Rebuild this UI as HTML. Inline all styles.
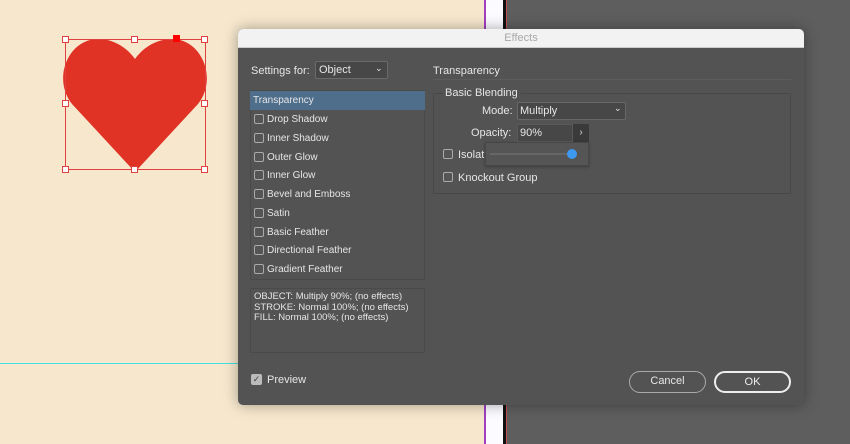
<!DOCTYPE html>
<html><head><style>
*{margin:0;padding:0;box-sizing:border-box}
body{width:850px;height:444px;overflow:hidden;position:relative;background:#5e5e5e;font-family:"Liberation Sans",sans-serif;}
.abs{position:absolute}
.t{color:#e6e6e6;font-size:10.5px;position:absolute;white-space:nowrap}
.cb{position:absolute;width:10px;height:10px;border:1px solid #aaa;border-radius:2px;background:#555}
.h{position:absolute;width:7px;height:7px;border:1px solid #e04040;background:#fff}
</style></head><body>
<div class="abs" style="left:0;top:0;width:484px;height:444px;background:#f6e7cd"></div>
<div class="abs" style="left:484px;top:0;width:2px;height:444px;background:#a040c0"></div>
<div class="abs" style="left:486px;top:0;width:17px;height:444px;background:#fcfbff"></div>
<div class="abs" style="left:503px;top:0;width:3px;height:444px;background:#111"></div>
<div class="abs" style="left:506px;top:0;width:1px;height:444px;background:#c05050"></div>
<div class="abs" style="left:0;top:363px;width:238px;height:1px;background:#40e0e0"></div>
<svg class="abs" style="left:60px;top:34px" width="150" height="140">
<path d="M75 138 L12 70 C-8 45 8 5 38 5 C55 5 68 15 75 25 C82 15 95 5 112 5 C142 5 158 45 138 70 Z" fill="#e03325"/>
<rect x="5.5" y="5.5" width="140" height="130" fill="none" stroke="#e04040" stroke-width="1"/>
</svg>
<div class="h" style="left:62px;top:36px"></div><div class="h" style="left:131px;top:36px"></div><div class="h" style="left:201px;top:36px"></div>
<div class="h" style="left:62px;top:100px"></div><div class="h" style="left:201px;top:100px"></div>
<div class="h" style="left:62px;top:166px"></div><div class="h" style="left:131px;top:166px"></div><div class="h" style="left:201px;top:166px"></div>
<div class="abs" style="left:173px;top:35px;width:7px;height:7px;background:#f00"></div>

<div class="abs" style="left:238px;top:29px;width:566px;height:376px;background:#535353;border-radius:5px;box-shadow:0 0 14px rgba(0,0,0,.35);overflow:hidden">
 <div class="abs" style="left:0;top:0;width:566px;height:19px;background:#f2f2f2;border-bottom:1px solid #ccc;color:#a8a8a8;font-size:11px;text-align:center;line-height:19px">Effects</div>
</div>
<div class="t" style="left:251px;top:65px;font-size:11px">Settings for:</div>
<div class="abs" style="left:315px;top:61px;width:73px;height:18px;border:1px solid #6a6a6a;background:#474747;border-radius:2px"></div>
<div class="t" style="left:319px;top:64px;font-size:11px">Object</div>
<div class="t" style="left:375px;top:63px;font-size:9px">⌄</div>
<div class="abs" style="left:250px;top:90px;width:175px;height:190px;border:1px solid #4a4a4a"></div>
<div class="abs" style="left:250px;top:91px;width:175px;height:19px;background:#4f6e8c"></div>
<div class="t" style="left:253px;top:95px;font-size:10px">Transparency</div>
<div class="cb" style="left:254px;top:114px"></div><div class="t" style="left:267px;top:114px;font-size:10px">Drop Shadow</div>
<div class="cb" style="left:254px;top:133px"></div><div class="t" style="left:267px;top:133px;font-size:10px">Inner Shadow</div>
<div class="cb" style="left:254px;top:152px"></div><div class="t" style="left:267px;top:152px;font-size:10px">Outer Glow</div>
<div class="cb" style="left:254px;top:170px"></div><div class="t" style="left:267px;top:170px;font-size:10px">Inner Glow</div>
<div class="cb" style="left:254px;top:189px"></div><div class="t" style="left:267px;top:189px;font-size:10px">Bevel and Emboss</div>
<div class="cb" style="left:254px;top:208px"></div><div class="t" style="left:267px;top:208px;font-size:10px">Satin</div>
<div class="cb" style="left:254px;top:227px"></div><div class="t" style="left:267px;top:227px;font-size:10px">Basic Feather</div>
<div class="cb" style="left:254px;top:245px"></div><div class="t" style="left:267px;top:245px;font-size:10px">Directional Feather</div>
<div class="cb" style="left:254px;top:264px"></div><div class="t" style="left:267px;top:264px;font-size:10px">Gradient Feather</div>
<div class="abs" style="left:250px;top:288px;width:175px;height:65px;border:1px solid #4a4a4a"></div>
<div class="t" style="left:254px;top:292px;font-size:9.5px;line-height:10.5px">OBJECT: Multiply 90%; (no effects)<br>STROKE: Normal 100%; (no effects)<br>FILL: Normal 100%; (no effects)</div>
<div class="abs" style="left:251px;top:374px;width:11px;height:11px;background:#bbb;border-radius:2px;color:#444;font-size:9px;line-height:11px;text-align:center">✓</div>
<div class="t" style="left:267px;top:374px;font-size:11px">Preview</div>

<div class="t" style="left:433px;top:65px;font-size:11px">Transparency</div>
<div class="abs" style="left:433px;top:79px;width:358px;height:1px;background:#5c5c5c"></div>
<div class="abs" style="left:433px;top:93px;width:358px;height:101px;border:1px solid #484848;border-radius:2px"></div>
<div class="abs" style="left:443px;top:87px;width:78px;height:12px;background:#535353"></div>
<div class="t" style="left:445px;top:87px;font-size:11px">Basic Blending</div>
<div class="t" style="left:482px;top:105px;font-size:11px">Mode:</div>
<div class="abs" style="left:517px;top:102px;width:109px;height:18px;border:1px solid #686868;background:#474747;border-radius:2px"></div>
<div class="t" style="left:520px;top:105px;font-size:11px">Multiply</div>
<div class="t" style="left:614px;top:103px;font-size:9px">⌄</div>
<div class="t" style="left:471px;top:127px;font-size:11px">Opacity:</div>
<div class="abs" style="left:517px;top:124px;width:56px;height:18px;background:#474747;border:1px solid #5a5a5a"></div>
<div class="t" style="left:520px;top:127px;font-size:11px">90%</div>
<div class="abs" style="left:573px;top:124px;width:16px;height:18px;background:#3a3a3a;color:#ddd;font-size:10px;text-align:center;line-height:17px">›</div>
<div class="cb" style="left:443px;top:149px"></div><div class="t" style="left:458px;top:149px;font-size:11px">Isolat</div>
<div class="abs" style="left:485px;top:142px;width:104px;height:24px;background:#555;border:1px solid #474747;box-shadow:0 1px 3px rgba(0,0,0,.3)"></div>
<div class="abs" style="left:490px;top:153px;width:80px;height:2px;background:#666"></div>
<div class="abs" style="left:567px;top:149px;width:10px;height:10px;border-radius:50%;background:#3d98f0"></div>
<div class="cb" style="left:443px;top:172px"></div><div class="t" style="left:458px;top:172px;font-size:11px">Knockout Group</div>

<div class="abs" style="left:629px;top:371px;width:77px;height:22px;border:1.5px solid #aaa;border-radius:11px;color:#e6e6e6;font-size:11px;text-align:center;line-height:19px">Cancel</div>
<div class="abs" style="left:714px;top:371px;width:77px;height:22px;border:2px solid #eee;border-radius:11px;color:#eee;font-size:11px;text-align:center;line-height:18px">OK</div>
</body></html>
